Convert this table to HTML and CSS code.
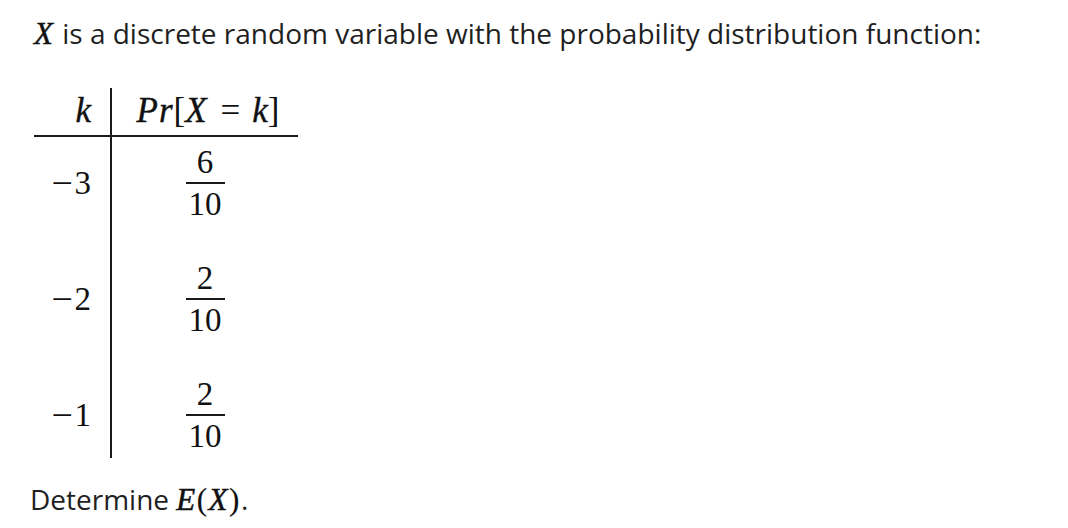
FILE: index.html
```html
<!DOCTYPE html>
<html lang="en">
<head>
<meta charset="utf-8">
<title>Discrete random variable</title>
<link rel="stylesheet" href="styles.css">
</head>
<body>
<main class="page">
  <p class="line"><span class="inl lead">X</span> is a discrete random variable with the probability distribution function:</p>
  <table class="pdf">
    <thead>
      <tr>
        <th class="kcol"><span class="mi">k</span></th>
        <th class="pcol"><span class="mi pr">Pr</span>[<span class="mi">X</span><span class="mo">=</span><span class="mi">k</span>]</th>
      </tr>
    </thead>
    <tbody>
      <tr>
        <td class="kcol"><span class="minus">&minus;</span>3</td>
        <td class="pcol"><span class="frac"><span class="num">6</span><span class="den">10</span></span></td>
      </tr>
      <tr>
        <td class="kcol"><span class="minus">&minus;</span>2</td>
        <td class="pcol"><span class="frac"><span class="num">2</span><span class="den">10</span></span></td>
      </tr>
      <tr class="last">
        <td class="kcol"><span class="minus">&minus;</span>1</td>
        <td class="pcol"><span class="frac"><span class="num">2</span><span class="den">10</span></span></td>
      </tr>
    </tbody>
  </table>
  <p class="line ask">Determine <span class="inl">E</span><span class="inl up">(</span><span class="inl">X</span><span class="inl up">)</span>.</p>
</main>
</body>
</html>
```

FILE: styles.css
```css
html, body {
  margin: 0;
  padding: 0;
  background: #ffffff;
}

.page {
  padding: 14px 0 0 30px;
  font-family: "Open Sans", "DejaVu Sans", sans-serif;
  font-size: 28px;
  color: #1f1f1f;
}

.line {
  margin: 0;
  line-height: 39px;
}

.inl {
  font-family: "Liberation Serif", "Times New Roman", serif;
  font-style: italic;
  font-size: 31px;
  color: #111111;
  -webkit-text-stroke: 0.5px #111111;
  letter-spacing: 1.5px;
}

.inl.lead {
  padding-left: 4px;
  letter-spacing: 2px;
}

.inl.up {
  font-style: normal;
  -webkit-text-stroke: 0.2px #111111;
}

.mi {
  font-style: italic;
  -webkit-text-stroke: 0.4px #111111;
}

.mi.pr {
  letter-spacing: 1px;
}

.mo {
  margin: 0 12px 0 14px;
}

.pdf {
  margin: 35px 0 0 4px;
  border-collapse: collapse;
  font-family: "Liberation Serif", "Times New Roman", serif;
  font-size: 33px;
  line-height: 33px;
  color: #111111;
}

.pdf th {
  font-weight: normal;
  font-size: 35px;
  padding: 6px 0 8px;
  border-bottom: 2px solid #1a1a1a;
}

.pdf th.pcol {
  text-indent: 6px;
}

.pdf td {
  padding: 9px 0 32px;
  vertical-align: middle;
}

.pdf tr.last td {
  padding-bottom: 5px;
}

.kcol {
  width: 57px;
  padding-right: 19px !important;
  text-align: right;
  border-right: 2px solid #1a1a1a;
}

.minus {
  display: inline-block;
  transform: scaleX(1.15);
  margin-right: 3px;
}

.pcol {
  width: 186px;
  text-align: center;
}

.frac {
  display: inline-flex;
  flex-direction: column;
  align-items: stretch;
  text-align: center;
  vertical-align: middle;
}

.num {
  padding: 0 0 3px;
  border-bottom: 2px solid #1a1a1a;
}

.den {
  padding: 4px 3px 0;
}

.ask {
  margin-top: 22px;
}
```
